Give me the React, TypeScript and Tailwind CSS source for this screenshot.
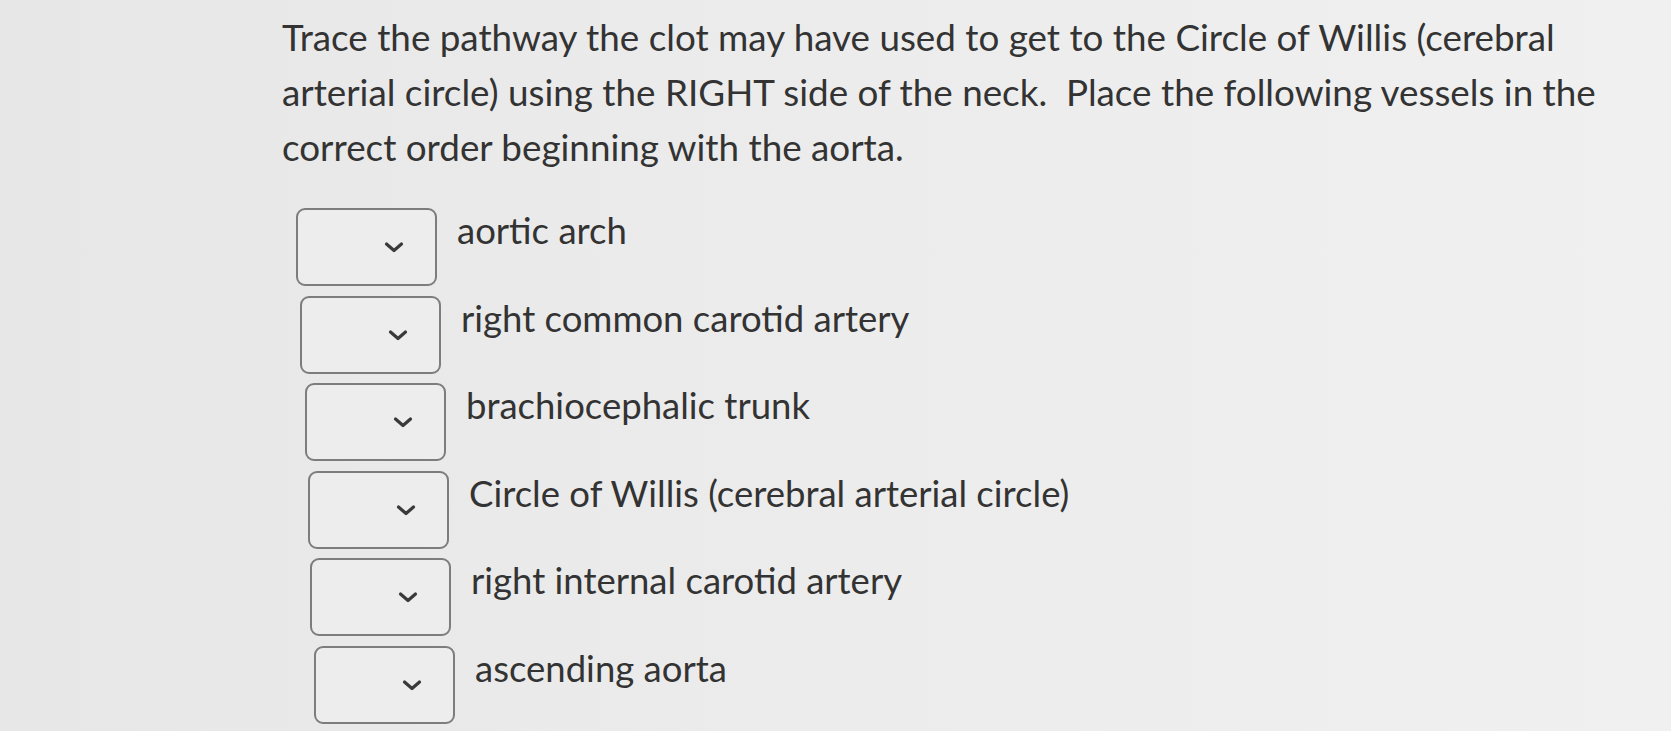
import { Fragment } from "react";

// vessel rows, each with its own small left nudge so the column leans like the screen
const vessels = [
  { label: "aortic arch", shift: "ml-0" },
  { label: "right common carotid artery", shift: "ml-[4px]" },
  { label: "brachiocephalic trunk", shift: "ml-[9px]" },
  { label: "Circle of Willis (cerebral arterial circle)", shift: "ml-[12px]" },
  { label: "right internal carotid artery", shift: "ml-[14px]" },
  { label: "ascending aorta", shift: "ml-[18px]" },
];

const lines = [
  "Trace the pathway the clot may have used to get to the Circle of Willis (cerebral",
  "arterial circle) using the RIGHT side of the neck.  Place the following vessels in the",
  "correct order beginning with the aorta.",
];

function Chevron() {
  return (
    <svg width="22" height="14" viewBox="0 0 22 14" fill="none">
      <path
        d="M3.5 4 L11 10.5 L18.5 4"
        stroke="#3a3a3a"
        strokeWidth="3.2"
        strokeLinecap="round"
        strokeLinejoin="round"
      />
    </svg>
  );
}

function OrderSelect() {
  return (
    <div className="w-[141px] h-[78px] shrink-0 rounded-[9px] border-2 border-[#7d7d7d] bg-[#ededed] flex items-center justify-end pr-[30px]">
      <Chevron />
    </div>
  );
}

export default function App() {
  return (
    <div
      className="w-[1671px] h-[731px] overflow-hidden bg-gradient-to-r from-[#e7e7e7] via-[#ececec] to-[#f0f0f0] text-[#333333]"
      style={{ fontFamily: "Lato, 'Open Sans', sans-serif" }}>
      <div className="pl-[282px] pt-[10px]">
        {/* Question prompt */}
        <p className="text-[36.8px] leading-[55px] whitespace-pre">
          {lines.map((line, i) => (
            <Fragment key={i}>
              {line}
              {i < lines.length - 1 && <br />}
            </Fragment>
          ))}
        </p>

        {/* Ordering dropdowns */}
        <div className="mt-[33px] ml-[14px] flex flex-col gap-[9.5px]">
          {vessels.map((v) => (
            <div key={v.label} className={`flex items-start ${v.shift}`}>
              <OrderSelect />
              <span className="ml-[20px] mt-[1px] text-[36.5px] leading-[42px]">
                {v.label}
              </span>
            </div>
          ))}
        </div>
      </div>
    </div>
  );
}
